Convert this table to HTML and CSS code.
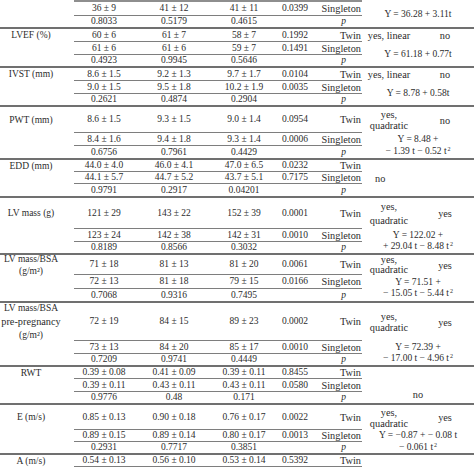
FILE: index.html
```html
<!DOCTYPE html>
<html>
<head>
<meta charset="utf-8">
<link rel="stylesheet" href="styles.css">
</head>
<body>
<div class="tbl">
  <!-- previous group (cut off at top) -->
  <div class="c"></div><div class="c d0"></div><div class="c d0"></div><div class="c d0"></div><div class="c d0"></div><div class="c d0"></div><div class="c"></div><div class="c"></div>
  <div class="c"></div><div class="c d">36 ± 9</div><div class="c d">41 ± 12</div><div class="c d">41 ± 11</div><div class="c d">0.0399</div><div class="c d g w">Singleton</div><div class="c f">Y = 36.28 + 3.11t</div>
  <div class="c e"></div><div class="c d e">0.8033</div><div class="c d e">0.5179</div><div class="c d e">0.4615</div><div class="c d e"></div><div class="c d e p">p</div>

  <!-- LVEF -->
  <div class="c lab">LVEF (%)</div><div class="c d">60 ± 6</div><div class="c d">61 ± 7</div><div class="c d">58 ± 7</div><div class="c d">0.1992</div><div class="c d g w">Twin</div><div class="c y7 w">yes, linear</div><div class="c y8 w">no</div>
  <div class="c"></div><div class="c d">61 ± 6</div><div class="c d">61 ± 6</div><div class="c d">59 ± 7</div><div class="c d">0.1491</div><div class="c d g w">Singleton</div><div class="c f">Y = 61.18 + 0.77t</div>
  <div class="c e"></div><div class="c d e">0.4923</div><div class="c d e">0.9945</div><div class="c d e">0.5646</div><div class="c d e"></div><div class="c d e p">p</div>

  <!-- IVST -->
  <div class="c lab">IVST (mm)</div><div class="c d">8.6 ± 1.5</div><div class="c d">9.2 ± 1.3</div><div class="c d">9.7 ± 1.7</div><div class="c d">0.0104</div><div class="c d g w">Twin</div><div class="c y7 w">yes, linear</div><div class="c y8 w">no</div>
  <div class="c"></div><div class="c d">9.0 ± 1.5</div><div class="c d">9.5 ± 1.8</div><div class="c d">10.2 ± 1.9</div><div class="c d">0.0035</div><div class="c d g w">Singleton</div><div class="c f">Y = 8.78 + 0.58t</div>
  <div class="c e"></div><div class="c d e">0.2621</div><div class="c d e">0.4874</div><div class="c d e">0.2904</div><div class="c d e"></div><div class="c d e p">p</div>

  <!-- PWT -->
  <div class="c lab">PWT (mm)</div><div class="c d">8.6 ± 1.5</div><div class="c d">9.3 ± 1.5</div><div class="c d">9.0 ± 1.4</div><div class="c d">0.0954</div><div class="c d g w">Twin</div><div class="c y7 w multi"><span>yes,</span><span>quadratic</span></div><div class="c y8 w">no</div>
  <div class="c"></div><div class="c d">8.4 ± 1.6</div><div class="c d">9.4 ± 1.8</div><div class="c d">9.3 ± 1.4</div><div class="c d">0.0006</div><div class="c d g w">Singleton</div><div class="c f multi"><span>Y = 8.48 +</span><span>− 1.39 t − 0.52 t<sup>2</sup></span></div>
  <div class="c e"></div><div class="c d e">0.6756</div><div class="c d e">0.7961</div><div class="c d e">0.4429</div><div class="c d e"></div><div class="c d e p">p</div>

  <!-- EDD -->
  <div class="c lab">EDD (mm)</div><div class="c d">44.0 ± 4.0</div><div class="c d">46.0 ± 4.1</div><div class="c d">47.0 ± 6.5</div><div class="c d">0.0232</div><div class="c d g w">Twin</div><div class="c no3 no-edd w">no</div>
  <div class="c"></div><div class="c d">44.1 ± 5.7</div><div class="c d">44.7 ± 5.2</div><div class="c d">43.7 ± 5.1</div><div class="c d">0.7175</div><div class="c d g w">Singleton</div>
  <div class="c e"></div><div class="c d e">0.9791</div><div class="c d e">0.2917</div><div class="c d e">0.04201</div><div class="c d e"></div><div class="c d e p">p</div>

  <!-- LV mass -->
  <div class="c lab">LV mass (g)</div><div class="c d">121 ± 29</div><div class="c d">143 ± 22</div><div class="c d">152 ± 39</div><div class="c d">0.0001</div><div class="c d g w">Twin</div><div class="c y7 w multi wide"><span>yes,</span><span>quadratic</span></div><div class="c y8 w">yes</div>
  <div class="c"></div><div class="c d">123 ± 24</div><div class="c d">142 ± 38</div><div class="c d">142 ± 31</div><div class="c d">0.0010</div><div class="c d g w">Singleton</div><div class="c f multi"><span>Y = 122.02 +</span><span>+ 29.04 t − 8.48 t<sup>2</sup></span></div>
  <div class="c e"></div><div class="c d e">0.8189</div><div class="c d e">0.8566</div><div class="c d e">0.3032</div><div class="c d e"></div><div class="c d e p">p</div>

  <!-- LV mass/BSA -->
  <div class="c lab multi"><span>LV mass/BSA</span><span>(g/m²)</span></div><div class="c d">71 ± 18</div><div class="c d">81 ± 13</div><div class="c d">81 ± 20</div><div class="c d">0.0061</div><div class="c d g w">Twin</div><div class="c y7 w multi tight"><span>yes,</span><span>quadratic</span></div><div class="c y8 w">yes</div>
  <div class="c"></div><div class="c d">72 ± 13</div><div class="c d">81 ± 18</div><div class="c d">79 ± 15</div><div class="c d">0.0166</div><div class="c d g w">Singleton</div><div class="c f multi"><span>Y = 71.51 +</span><span>− 15.05 t − 5.44 t<sup>2</sup></span></div>
  <div class="c e"></div><div class="c d e">0.7068</div><div class="c d e">0.9316</div><div class="c d e">0.7495</div><div class="c d e"></div><div class="c d e p">p</div>

  <!-- LV mass/BSA pre-pregnancy -->
  <div class="c lab multi wide"><span>LV mass/BSA</span><span class="w">pre-pregnancy</span><span>(g/m²)</span></div><div class="c d">72 ± 19</div><div class="c d">84 ± 15</div><div class="c d">89 ± 23</div><div class="c d">0.0002</div><div class="c d g w">Twin</div><div class="c y7 w multi"><span>yes,</span><span>quadratic</span></div><div class="c y8 w">yes</div>
  <div class="c"></div><div class="c d">73 ± 13</div><div class="c d">84 ± 20</div><div class="c d">85 ± 17</div><div class="c d">0.0010</div><div class="c d g w">Singleton</div><div class="c f multi"><span>Y = 72.39 +</span><span>− 17.00 t − 4.96 t<sup>2</sup></span></div>
  <div class="c e"></div><div class="c d e">0.7209</div><div class="c d e">0.9741</div><div class="c d e">0.4449</div><div class="c d e"></div><div class="c d e p">p</div>

  <!-- RWT -->
  <div class="c lab">RWT</div><div class="c d">0.39 ± 0.08</div><div class="c d">0.41 ± 0.09</div><div class="c d">0.39 ± 0.11</div><div class="c d">0.8455</div><div class="c d g w">Twin</div><div class="c no3 no-rwt w">no</div>
  <div class="c"></div><div class="c d">0.39 ± 0.11</div><div class="c d">0.43 ± 0.11</div><div class="c d">0.43 ± 0.11</div><div class="c d">0.0580</div><div class="c d g w">Singleton</div>
  <div class="c e"></div><div class="c d e">0.9776</div><div class="c d e">0.48</div><div class="c d e">0.171</div><div class="c d e"></div><div class="c d e p">p</div>

  <!-- E -->
  <div class="c lab">E (m/s)</div><div class="c d">0.85 ± 0.13</div><div class="c d">0.90 ± 0.18</div><div class="c d">0.76 ± 0.17</div><div class="c d">0.0022</div><div class="c d g w">Twin</div><div class="c y7 w multi"><span>yes,</span><span>quadratic</span></div><div class="c y8 w">yes</div>
  <div class="c"></div><div class="c d">0.89 ± 0.15</div><div class="c d">0.89 ± 0.14</div><div class="c d">0.80 ± 0.17</div><div class="c d">0.0013</div><div class="c d g w">Singleton</div><div class="c f multi"><span>Y = −0.87 + − 0.08 t</span><span>− 0.061 t<sup>2</sup></span></div>
  <div class="c e"></div><div class="c d e">0.2931</div><div class="c d e">0.7717</div><div class="c d e">0.3851</div><div class="c d e"></div><div class="c d e p">p</div>

  <!-- A -->
  <div class="c lab">A (m/s)</div><div class="c d">0.54 ± 0.13</div><div class="c d">0.56 ± 0.10</div><div class="c d">0.53 ± 0.14</div><div class="c d">0.5392</div><div class="c d g w">Twin</div><div class="c"></div><div class="c"></div>
</div>
</body>
</html>
```

FILE: styles.css
```css
html, body {
  margin: 0;
  padding: 0;
  background: #ffffff;
}

body {
  width: 474px;
  height: 474px;
  overflow: hidden;
  font-family: "Liberation Serif", "Times New Roman", serif;
  font-size: 9.5px;
  color: #2c2c2c;
}

.tbl {
  display: grid;
  width: 486px;
  margin-left: -12px;
  grid-template-columns: 86px 60px 80px 60px 42px 46px 54px 58px;
  grid-template-rows:
    2px 14px 13px
    13px 13px 13px
    13px 13px 13px
    26px 13px 14px
    12px 12px 14px
    31px 13px 13px
    20px 14px 14px
    38px 13px 13px
    12px 13px 13px
    25px 12px 13px
    12px;
}

.c {
  display: flex;
  align-items: center;
  justify-content: center;
  white-space: nowrap;
  line-height: 11px;
  box-sizing: border-box;
  min-width: 0;
}

.d0 {
  border-bottom: 2px solid #8e8e8e;
}

.d {
  border-bottom: 1px solid #7e7e7e;
}

.e,
.d.e {
  border-bottom: 2px solid #707070;
}

.w {
  font-size: 10.3px;
}

.g {
  justify-content: flex-end;
  padding-right: 1px;
}

.p {
  font-style: italic;
  padding-left: 9px;
}

.multi {
  flex-direction: column;
  line-height: 11px;
}

.multi.wide {
  line-height: 13.5px;
}

.multi.tight {
  line-height: 10px;
}

.lab.multi {
  line-height: 12px;
}

.lab.multi.wide {
  line-height: 13.5px;
}

.f {
  grid-column: span 2;
  grid-row: span 2;
  border-bottom: 2px solid #707070;
}

.f.multi {
  line-height: 11.5px;
}

.no3 {
  grid-column: span 2;
  grid-row: span 3;
  border-bottom: 2px solid #707070;
}

.no-edd {
  justify-content: flex-start;
  padding-left: 13px;
}

.no-rwt {
  padding-top: 18px;
}

sup {
  font-size: 6px;
  line-height: 0;
  vertical-align: 3px;
  margin-left: 1px;
}
```
